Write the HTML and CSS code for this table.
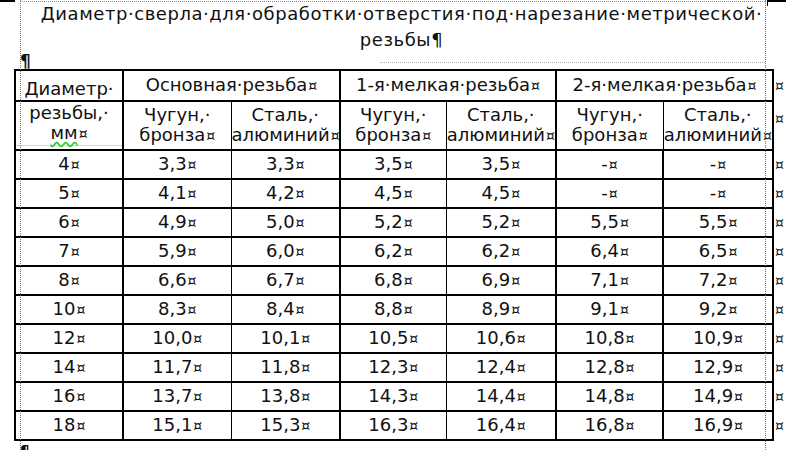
FILE: index.html
```html
<!DOCTYPE html>
<html lang="ru">
<head>
<meta charset="utf-8">
<title>Диаметр сверла</title>
<link rel="stylesheet" href="styles.css">
</head>
<body>
<div class="page">
  <div class="guide guide-v guide-left"></div>
  <div class="guide guide-v guide-right"></div>
  <div class="guide guide-h guide-top"></div>
  <div class="guide guide-h guide-mid"></div>
  <div class="corner corner-tl"></div>
  <div class="corner corner-tr"></div>
  <div class="corner corner-tr-v"></div>

  <h1 class="title">Диаметр·сверла·для·обработки·отверстия·под·нарезание·метрической·<br>резьбы¶</h1>
  <p class="pilcrow">¶</p>

  <table class="drill">
    <colgroup>
      <col class="c1"><col class="c2"><col class="c3"><col class="c4"><col class="c5"><col class="c6"><col class="c7"><col class="cend">
    </colgroup>
    <thead>
      <tr class="h1">
        <th class="dia-top">Диаметр·</th>
        <th colspan="2">Основная·резьба<span class="m">¤</span></th>
        <th colspan="2">1-я·мелкая·резьба<span class="m">¤</span></th>
        <th colspan="2">2-я·мелкая·резьба<span class="m">¤</span></th>
        <td class="rowend">¤</td>
      </tr>
      <tr class="h2">
        <th class="dia-bot">резьбы,·<br><span class="spell">мм</span><span class="m">¤</span></th>
        <th class="tr1">Чугун,·<br>бронза<span class="m">¤</span></th>
        <th class="tl1">Сталь,·<br>алюминий<span class="m">¤</span></th>
        <th class="tr1">Чугун,·<br>бронза<span class="m">¤</span></th>
        <th class="tl1">Сталь,·<br>алюминий<span class="m">¤</span></th>
        <th class="tr1">Чугун,·<br>бронза<span class="m">¤</span></th>
        <th class="tl1">Сталь,·<br>алюминий<span class="m">¤</span></th>
        <td class="rowend top">¤</td>
      </tr>
    </thead>
    <tbody>
      <tr><td>4<span class="m">¤</span></td><td class="tr1">3,3<span class="m">¤</span></td><td class="tl1">3,3<span class="m">¤</span></td><td class="tr1">3,5<span class="m">¤</span></td><td class="tl1">3,5<span class="m">¤</span></td><td>-<span class="m">¤</span></td><td>-<span class="m">¤</span></td><td class="rowend">¤</td></tr>
      <tr><td>5<span class="m">¤</span></td><td class="tr1">4,1<span class="m">¤</span></td><td class="tl1">4,2<span class="m">¤</span></td><td class="tr1">4,5<span class="m">¤</span></td><td class="tl1">4,5<span class="m">¤</span></td><td>-<span class="m">¤</span></td><td>-<span class="m">¤</span></td><td class="rowend">¤</td></tr>
      <tr><td>6<span class="m">¤</span></td><td class="tr1">4,9<span class="m">¤</span></td><td class="tl1">5,0<span class="m">¤</span></td><td class="tr1">5,2<span class="m">¤</span></td><td class="tl1">5,2<span class="m">¤</span></td><td>5,5<span class="m">¤</span></td><td>5,5<span class="m">¤</span></td><td class="rowend">¤</td></tr>
      <tr><td>7<span class="m">¤</span></td><td class="tr1">5,9<span class="m">¤</span></td><td class="tl1">6,0<span class="m">¤</span></td><td class="tr1">6,2<span class="m">¤</span></td><td class="tl1">6,2<span class="m">¤</span></td><td>6,4<span class="m">¤</span></td><td>6,5<span class="m">¤</span></td><td class="rowend">¤</td></tr>
      <tr><td>8<span class="m">¤</span></td><td class="tr1">6,6<span class="m">¤</span></td><td class="tl1">6,7<span class="m">¤</span></td><td class="tr1">6,8<span class="m">¤</span></td><td class="tl1">6,9<span class="m">¤</span></td><td>7,1<span class="m">¤</span></td><td>7,2<span class="m">¤</span></td><td class="rowend">¤</td></tr>
      <tr><td>10<span class="m">¤</span></td><td class="tr1">8,3<span class="m">¤</span></td><td class="tl1">8,4<span class="m">¤</span></td><td class="tr1">8,8<span class="m">¤</span></td><td class="tl1">8,9<span class="m">¤</span></td><td>9,1<span class="m">¤</span></td><td>9,2<span class="m">¤</span></td><td class="rowend">¤</td></tr>
      <tr><td>12<span class="m">¤</span></td><td class="tr1">10,0<span class="m">¤</span></td><td class="tl1">10,1<span class="m">¤</span></td><td class="tr1">10,5<span class="m">¤</span></td><td class="tl1">10,6<span class="m">¤</span></td><td>10,8<span class="m">¤</span></td><td>10,9<span class="m">¤</span></td><td class="rowend">¤</td></tr>
      <tr><td>14<span class="m">¤</span></td><td class="tr1">11,7<span class="m">¤</span></td><td class="tl1">11,8<span class="m">¤</span></td><td class="tr1">12,3<span class="m">¤</span></td><td class="tl1">12,4<span class="m">¤</span></td><td>12,8<span class="m">¤</span></td><td>12,9<span class="m">¤</span></td><td class="rowend">¤</td></tr>
      <tr><td>16<span class="m">¤</span></td><td class="tr1">13,7<span class="m">¤</span></td><td class="tl1">13,8<span class="m">¤</span></td><td class="tr1">14,3<span class="m">¤</span></td><td class="tl1">14,4<span class="m">¤</span></td><td>14,8<span class="m">¤</span></td><td>14,9<span class="m">¤</span></td><td class="rowend">¤</td></tr>
      <tr><td>18<span class="m">¤</span></td><td class="tr1">15,1<span class="m">¤</span></td><td class="tl1">15,3<span class="m">¤</span></td><td class="tr1">16,3<span class="m">¤</span></td><td class="tl1">16,4<span class="m">¤</span></td><td>16,8<span class="m">¤</span></td><td>16,9<span class="m">¤</span></td><td class="rowend">¤</td></tr>
    </tbody>
  </table>
  <p class="pilcrow bottom">¶</p>
</div>
</body>
</html>
```
FILE: styles.css
```css
body {
  margin: 0;
  background: #fff;
}

.page {
  position: relative;
  width: 786px;
  height: 450px;
  overflow: hidden;
  font-family: "DejaVu Sans", Verdana, sans-serif;
  color: #111;
  background: #fff;
}

/* text-boundary guides of the word processor */
.guide {
  position: absolute;
}
.guide-v {
  top: 0;
  bottom: 0;
  width: 0;
  border-left: 1px dotted #777;
}
.guide-left { left: 20px; }
.guide-right { left: 765px; }
.guide-h {
  height: 0;
  border-top: 1px dotted #888;
}
.guide-top { top: 1px; left: 20px; width: 745px; }
.guide-mid { top: 62px; left: 380px; width: 385px; border-top-color: #aaa; }

.corner {
  position: absolute;
  background: #000;
}
.corner-tl { left: 0; top: 0; width: 15px; height: 2px; }
.corner-tr { left: 767px; top: 0; width: 19px; height: 2px; }
.corner-tr-v { left: 767px; top: 0; width: 1px; height: 6px; }

.title {
  margin: 0 21px 0 20px;
  padding: 1px 0 0 18px;
  font-size: 18px;
  font-weight: normal;
  letter-spacing: 0.55px;
  line-height: 26px;
  text-align: center;
  white-space: nowrap;
}

.pilcrow {
  margin: 0 0 0 20px;
  height: 16px;
  font-size: 17px;
  line-height: 16px;
  font-weight: bold;
}
.pilcrow.bottom {
  font-size: 15px;
  line-height: 14px;
  height: 14px;
  margin-top: 4px;
}

.drill {
  margin-left: 14px;
  width: 772px;
  border-collapse: collapse;
  table-layout: fixed;
  font-size: 18px;
}
.c1 { width: 108px; }
.c2 { width: 108px; }
.c3 { width: 109px; }
.c4 { width: 106px; }
.c5 { width: 110px; }
.c6 { width: 107px; }
.c7 { width: 110px; }
.cend { width: 14px; }

.drill th,
.drill td {
  border: 2px solid #000;
  padding: 0;
  font-weight: normal;
  text-align: center;
  vertical-align: middle;
  white-space: nowrap;
  overflow: hidden;
  line-height: 20px;
}

.drill .tr1 { border-right-width: 1px; }
.drill .tl1 { border-left-width: 1px; }

.drill tr.h1 th { height: 28px; }
.drill tr.h2 th { height: 46px; }
.drill tbody td { height: 27px; }

.drill th.dia-top {
  vertical-align: bottom;
  padding-bottom: 1px;
}
.drill th.dia-bot {
  vertical-align: top;
  padding-top: 1px;
  box-shadow: inset 0 -3px 0 #fff, inset 0 -4px 0 #d8d8d8;
}

.m {
  font-size: 14px;
  padding-left: 1px;
}

.spell {
  text-decoration: underline wavy #3c3;
  text-underline-offset: 2px;
}

.drill td.rowend {
  border: none;
  text-align: left;
  font-size: 14px;
  padding-left: 1px;
  color: #222;
  overflow: visible;
}
.drill td.rowend.top {
  vertical-align: top;
  padding-top: 8px;
}
```
